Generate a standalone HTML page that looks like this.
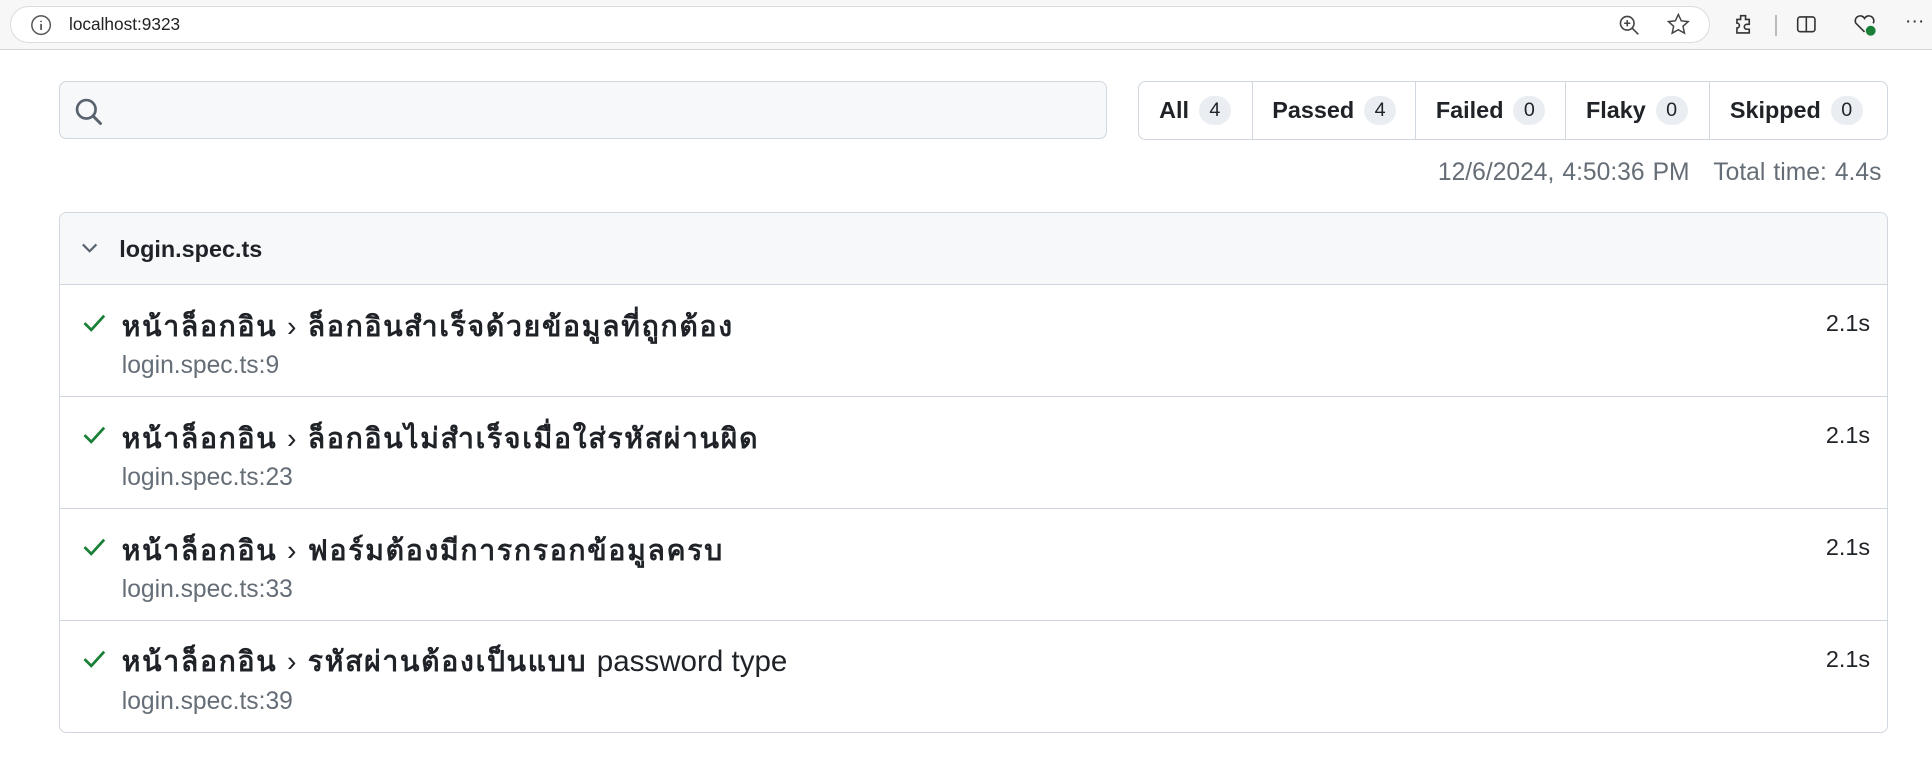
<!DOCTYPE html>
<html><head><meta charset="utf-8"><style>
html,body{margin:0;padding:0;background:#fff;overflow:hidden}
body{width:1932px;height:772px}
#w{zoom:1.2321;width:1568px;height:627px;position:relative;font-family:"Liberation Sans","DejaVu Sans",sans-serif;color:#1f2328}
.abs{position:absolute}
.bar{left:0;top:0;width:1568px;height:40px;background:#f7f7f7;border-bottom:1px solid #d6d6d6}
.url{left:8px;top:5px;width:1378px;height:28px;background:#fff;border:1px solid #dcdcdc;border-radius:15px}
.search{left:48px;top:66px;width:849px;height:45px;background:#f6f8fa;border:1px solid #d0d7de;border-radius:6px}
.filters{left:924px;top:66px;width:607px;height:46px;border:1px solid #d0d7de;border-radius:6px;display:flex}
.filters div{display:flex;align-items:center;padding:0 0 0 16px;border-right:1px solid #d0d7de;font-size:19px;font-weight:600}
.filters div:last-child{border-right:0}
.c{display:inline-block;background:#eaeef2;border-radius:12px;min-width:26px;height:24px;line-height:24px;text-align:center;font-size:16px;font-weight:500;margin-left:8px}
.meta{right:41px;top:129px;font-size:20px;color:#656d76;word-spacing:1px}
.card{left:48px;top:172px;width:1483px;height:421px;border:1px solid #d0d7de;border-radius:6px;overflow:hidden}
.hd{height:58px;background:#f6f8fa;border-bottom:1px solid #d0d7de;position:relative}
.row{height:90px;border-bottom:1px solid #d0d7de;position:relative}
.row:last-child{border-bottom:0}
.t{position:absolute;left:50px;top:15px;font-size:23px;font-weight:700;white-space:nowrap;letter-spacing:1.4px}
.t span{font-weight:400}
.t .p{font-size:24px;letter-spacing:0}
.f{position:absolute;left:50px;top:54px;font-size:20px;color:#656d76}
.d{position:absolute;right:14px;top:20px;font-size:19px}
.ck{position:absolute;left:18px;top:22px}
</style></head><body><div id="w">
<div class="abs bar"></div>
<div class="abs url"></div>
<svg class="abs" style="left:24px;top:11px" width="18" height="18" viewBox="0 0 18 18"><circle cx="9" cy="9" r="7.5" fill="none" stroke="#555" stroke-width="1.2"/><path d="M9 8v5M9 5.5v1" stroke="#555" stroke-width="1.4"/></svg>
<div class="abs" style="left:56px;top:11px;font-size:14px;color:#222">localhost:9323</div>
<svg class="abs" style="left:1313px;top:11px" width="18" height="18" viewBox="0 0 18 18"><circle cx="7.5" cy="7.5" r="5.5" fill="none" stroke="#444" stroke-width="1.3"/><path d="M11.5 11.5l5 5M5 7.5h5M7.5 5v5" stroke="#444" stroke-width="1.3"/></svg>
<svg class="abs" style="left:1352px;top:10px" width="20" height="20" viewBox="0 0 20 20"><path d="M10 2l2.4 5.2 5.6.6-4.2 3.8 1.2 5.6L10 14.4 5 17.2l1.2-5.6L2 7.8l5.6-.6z" fill="none" stroke="#444" stroke-width="1.2"/></svg>
<svg class="abs" style="left:1406px;top:10px" width="20" height="20" viewBox="0 0 20 20"><path d="M7 3h4v3h3v4h-2a2 2 0 0 0 0 4h2v3H4v-4a2 2 0 0 0 0-4V6h3z" fill="none" stroke="#333" stroke-width="1.3"/></svg>
<div class="abs" style="left:1441px;top:12px;width:1px;height:17px;background:#bbb"></div>
<svg class="abs" style="left:1456px;top:10px" width="20" height="20" viewBox="0 0 20 20"><rect x="3" y="4" width="14" height="12" rx="2" fill="none" stroke="#333" stroke-width="1.3"/><path d="M10 4v12" stroke="#333" stroke-width="1.3"/></svg>
<svg class="abs" style="left:1502px;top:9px" width="22" height="22" viewBox="0 0 22 22"><path d="M11 17L4 10a3.5 3.5 0 0 1 7-4 3.5 3.5 0 0 1 7 4" fill="none" stroke="#333" stroke-width="1.3"/><circle cx="16" cy="16" r="4" fill="#1a7f37"/></svg>
<div class="abs" style="left:1546px;top:8px;font-size:16px;color:#333">···</div>
<div class="abs search"></div>
<svg class="abs" style="left:60px;top:79px" width="24" height="24" viewBox="0 0 24 24"><circle cx="10" cy="10" r="7.5" fill="none" stroke="#59636e" stroke-width="2.2"/><path d="M15.5 15.5l6 6" stroke="#59636e" stroke-width="2.4" stroke-linecap="round"/></svg>
<div class="abs filters">
<div style="width:75px">All<span class="c">4</span></div>
<div style="width:116px">Passed<span class="c">4</span></div>
<div style="width:105px">Failed<span class="c">0</span></div>
<div style="width:100px">Flaky<span class="c">0</span></div>
<div style="width:127px">Skipped<span class="c">0</span></div>
</div>
<div class="abs meta">12/6/2024, 4:50:36 PM&nbsp;&nbsp; Total time: 4.4s</div>
<div class="abs card">
<div class="hd"><svg style="position:absolute;left:17px;top:24px" width="14" height="10" viewBox="0 0 14 10"><path d="M1.5 2l5.5 5.5L12.5 2" fill="none" stroke="#59636e" stroke-width="1.8"/></svg><div style="position:absolute;left:48px;top:19px;font-size:19px;font-weight:600">login.spec.ts</div></div>
<div class="row"><svg class="ck" width="20" height="18" viewBox="0 0 20 18"><path d="M2 9l5.5 5.5L18 3" fill="none" stroke="#1a7f37" stroke-width="2.2"/></svg><div class="t">หน้าล็อกอิน <span>›</span> ล็อกอินสำเร็จด้วยข้อมูลที่ถูกต้อง</div><div class="f">login.spec.ts:9</div><div class="d">2.1s</div></div>
<div class="row"><svg class="ck" width="20" height="18" viewBox="0 0 20 18"><path d="M2 9l5.5 5.5L18 3" fill="none" stroke="#1a7f37" stroke-width="2.2"/></svg><div class="t">หน้าล็อกอิน <span>›</span> ล็อกอินไม่สำเร็จเมื่อใส่รหัสผ่านผิด</div><div class="f">login.spec.ts:23</div><div class="d">2.1s</div></div>
<div class="row"><svg class="ck" width="20" height="18" viewBox="0 0 20 18"><path d="M2 9l5.5 5.5L18 3" fill="none" stroke="#1a7f37" stroke-width="2.2"/></svg><div class="t">หน้าล็อกอิน <span>›</span> ฟอร์มต้องมีการกรอกข้อมูลครบ</div><div class="f">login.spec.ts:33</div><div class="d">2.1s</div></div>
<div class="row"><svg class="ck" width="20" height="18" viewBox="0 0 20 18"><path d="M2 9l5.5 5.5L18 3" fill="none" stroke="#1a7f37" stroke-width="2.2"/></svg><div class="t">หน้าล็อกอิน <span>›</span> รหัสผ่านต้องเป็นแบบ <span class="p">password type</span></div><div class="f">login.spec.ts:39</div><div class="d">2.1s</div></div>
</div>
</div></body></html>
